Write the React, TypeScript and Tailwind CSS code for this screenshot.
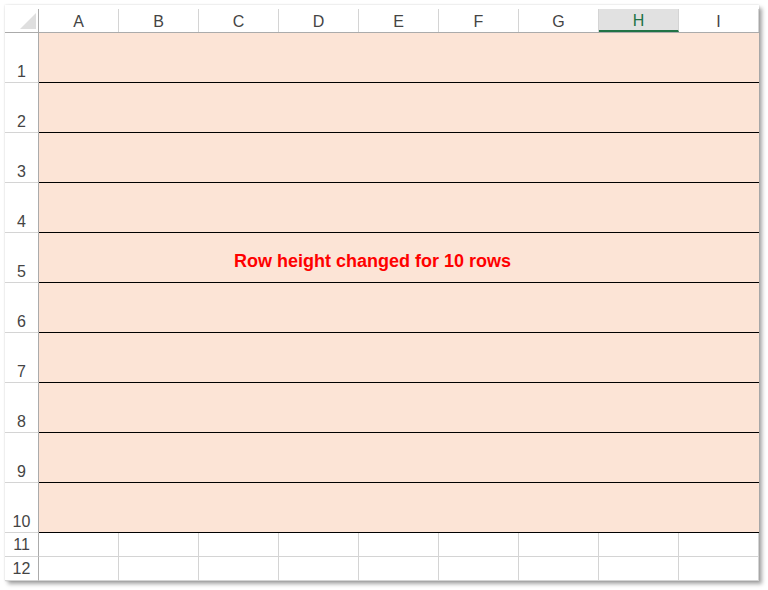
const COLUMNS = ["A", "B", "C", "D", "E", "F", "G", "H", "I"];
const FILLED_ROWS = [1, 2, 3, 4, 5, 6, 7, 8, 9, 10];
const PLAIN_ROWS = [11, 12];

function CornerCell() {
  return (
    <div className="relative w-[34px] h-full border-r border-[#ababab] shrink-0">
      <svg className="absolute left-[15px] top-[4px]" width="16" height="16" viewBox="0 0 16 16">
        <polygon points="16,0 16,16 0,16" fill="#dfdfdf" />
      </svg>
    </div>
  );
}

function ColumnHeader({ label }: { label: string }) {
  const active = label === "H";
  return (
    <div
      className={
        active
          ? "w-[80px] h-full shrink-0 flex items-center justify-center bg-[#e1e1e1] border-b-2 border-[#217346] text-[#217346] border-r border-r-[#d4d4d4] pt-[2px]"
          : "w-[80px] h-full shrink-0 flex items-center justify-center border-r border-[#d4d4d4] text-[#444] pt-[2px]"
      }
    >
      {label}
    </div>
  );
}

function RowNumber({ n, tall }: { n: number; tall: boolean }) {
  return (
    <div
      className={`w-[34px] shrink-0 flex justify-center border-r border-b border-r-[#ababab] border-b-[#d4d4d4] text-[#444] leading-[20px] ${
        tall ? "items-end" : "items-center"
      }`}
    >
      {n}
    </div>
  );
}

export default function App() {
  return (
    <div className="w-[768px] h-[590px] bg-white pl-[5px] pt-[5px] font-['Liberation_Sans',Arial,sans-serif]">
      <div className="w-[754px] h-[576px] bg-white pt-[4px] shadow-[0_0_2px_rgba(0,0,0,0.15),3px_3px_4px_rgba(0,0,0,0.35)] text-[16px]">
        {/* column letters */}
        <div className="flex h-[24px] border-b border-[#ababab]">
          <CornerCell />
          {COLUMNS.map((c) => (
            <ColumnHeader key={c} label={c} />
          ))}
        </div>

        {/* rows with changed height, shaded */}
        {FILLED_ROWS.map((n) => (
          <div key={n} className="flex h-[50px]">
            <RowNumber n={n} tall />
            <div className="flex-1 flex items-center bg-[#fce4d6] border-b border-black">
              {n === 5 && (
                <span className="ml-[195px] mt-[6px] text-[18px] leading-[24px] font-bold text-[#ff0000]">
                  Row height changed for 10 rows
                </span>
              )}
            </div>
          </div>
        ))}

        {/* default rows */}
        {PLAIN_ROWS.map((n) => (
          <div key={n} className="flex h-[24px]">
            <RowNumber n={n} tall={false} />
            {COLUMNS.map((c) => (
              <div key={c} className="w-[80px] shrink-0 border-r border-b border-[#d4d4d4]" />
            ))}
          </div>
        ))}
      </div>
    </div>
  );
}
